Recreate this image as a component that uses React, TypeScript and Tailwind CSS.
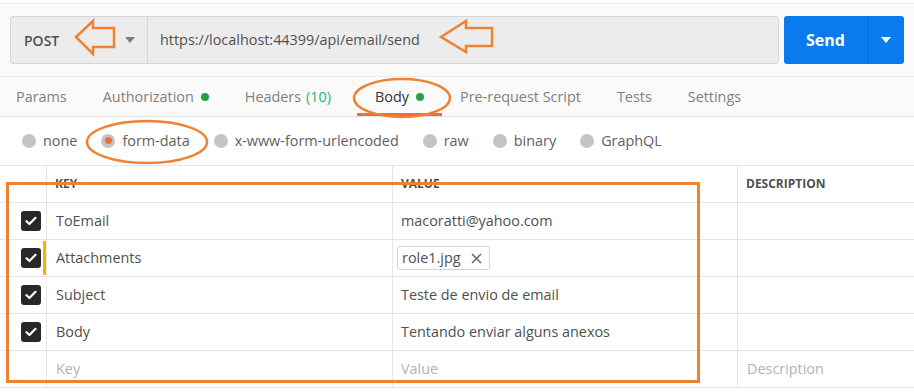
const TABS = [
  { label: 'Params' },
  { label: 'Authorization', dot: true },
  { label: 'Headers', count: '(10)' },
  { label: 'Body', dot: true, active: true },
  { label: 'Pre-request Script' },
  { label: 'Tests' },
  { label: 'Settings' },
];

const BODY_TYPES = ['none', 'form-data', 'x-www-form-urlencoded', 'raw', 'binary', 'GraphQL'];

const ROWS = [
  { key: 'ToEmail', value: 'macoratti@yahoo.com' },
  { key: 'Attachments', file: 'role1.jpg', marked: true },
  { key: 'Subject', value: 'Teste de envio de email' },
  { key: 'Body', value: 'Tentando enviar alguns anexos' },
];

function Check() {
  return (
    <div className="flex h-[20px] w-[20px] items-center justify-center rounded-[3px] bg-[#282828]">
      <svg width="12" height="10" viewBox="0 0 12 10" fill="none">
        <path d="M1.5 5.2 4.4 8 10.5 1.8" stroke="white" strokeWidth="2.2" strokeLinecap="round" strokeLinejoin="round" />
      </svg>
    </div>
  );
}

function Annotations() {
  return (
    <svg className="pointer-events-none absolute left-0 top-0" width="914" height="392" viewBox="0 0 914 392" fill="none">
      <g stroke="#ee8233" strokeWidth="2.5" strokeLinejoin="miter">
        <path d="M76 37 93 21 V28 H114 V47 H93 V54 Z" />
        <path d="M441 37 466 21 V28 H492 V46 H466 V52 Z" />
        <ellipse cx="402" cy="98" rx="48" ry="19" />
        <ellipse cx="147" cy="142" rx="60" ry="21" />
      </g>
      <rect x="7.5" y="183.5" width="691" height="198" stroke="#ee8233" strokeWidth="3" />
    </svg>
  );
}

export default function App() {
  return (
    <div className="relative h-[392px] w-[914px] overflow-hidden bg-white font-['Open_Sans',sans-serif] text-[14.4px] text-[#505050]">
      <div className="mt-[3px] border-t border-[#ebebeb] bg-[#fafafa]">
        <div className="flex h-[72px] items-start px-[10px] pt-[12px]">
          <div className="flex h-[48px] flex-1 rounded-[3px] border border-[#d6d6d6] bg-[#ececec]">
            <div className="flex w-[137px] items-center justify-between border-r border-[#d6d6d6] pl-[13px] pr-[12px]">
              <span className="text-[14px] font-semibold text-[#505050]">POST</span>
              <svg width="10" height="6" viewBox="0 0 10 6"><path d="M0 0h10L5 6z" fill="#808080" /></svg>
            </div>
            <div className="flex items-center pl-[12px] text-[#505050]">https://localhost:44399/api/email/send</div>
          </div>
          <div className="ml-[5px] flex h-[48px] w-[120px] rounded-[3px] bg-[#097bed] text-white">
            <div className="flex w-[83px] items-center justify-center text-[16px] font-bold">Send</div>
            <div className="flex flex-1 items-center justify-center border-l border-[#0a6acc]">
              <svg width="10" height="6" viewBox="0 0 10 6"><path d="M0 0h10L5 6z" fill="white" /></svg>
            </div>
          </div>
        </div>
        <div className="border-t border-[#ebebeb]">
          <div className="-ml-[2px] flex h-[40px] items-stretch border-b border-[#e3e3e3]">
            {TABS.map((t) => (
              <div
                key={t.label}
                className={`flex items-center gap-[7px] border-b-[3px] px-[18px] pt-[3px] ${
                  t.active ? 'ml-[8px] border-[#f26b3a] text-[#333]' : 'border-transparent text-[#808080]'
                }`}
              >
                <span>{t.label}</span>
                {t.count && <span className="-ml-[2px] text-[#26b47f]">{t.count}</span>}
                {t.dot && <span className="h-[8px] w-[8px] rounded-full bg-[#26a048]" />}
              </div>
            ))}
          </div>
        </div>
      </div>
      <div className="flex h-[48px] items-center gap-[24px] pl-[22px]">
        {BODY_TYPES.map((b) => (
          <div key={b} className="flex items-center gap-[7px] text-[#606060]">
            <span className="flex h-[14px] w-[14px] items-center justify-center rounded-full bg-[#c4c4c4]">
              {b === 'form-data' && <span className="h-[7px] w-[7px] rounded-full bg-[#f26b3a]" />}
            </span>
            <span>{b}</span>
          </div>
        ))}
      </div>
      <div className="border-t border-[#e6e6e6]">
        <div className="grid h-[37px] grid-cols-[46px_346px_345px_1fr] border-b border-[#e6e6e6] text-[12px] font-bold text-[#505050]">
          <div />
          <div className="flex items-center border-l border-[#e6e6e6] pl-[8px]">KEY</div>
          <div className="flex items-center border-l border-[#e6e6e6] pl-[8px]">VALUE</div>
          <div className="flex items-center border-l border-[#e6e6e6] pl-[8px]">DESCRIPTION</div>
        </div>
        {ROWS.map((r) => (
          <div key={r.key} className="grid h-[37px] grid-cols-[46px_346px_345px_1fr] border-b border-[#e6e6e6]">
            <div className="relative flex items-center pl-[21px]">
              <Check />
              {r.marked && <span className="absolute right-0 top-[1px] h-[34px] w-[3px] bg-[#f5b400]" />}
            </div>
            <div className="flex items-center border-l border-[#e6e6e6] pl-[9px]">{r.key}</div>
            <div className="flex items-center border-l border-[#e6e6e6] pl-[8px]">
              {r.file ? (
                <span className="-ml-[4px] flex h-[24px] items-center gap-[10px] rounded-[3px] border border-[#d4d4d4] pl-[4px] pr-[7px]">
                  {r.file}
                  <svg width="11" height="11" viewBox="0 0 11 11"><path d="M1 1l9 9M10 1l-9 9" stroke="#707070" strokeWidth="1.6" /></svg>
                </span>
              ) : (
                r.value
              )}
            </div>
            <div className="border-l border-[#e6e6e6]" />
          </div>
        ))}
        <div className="grid h-[37px] grid-cols-[46px_346px_345px_1fr] border-b border-[#e6e6e6] text-[#b3b3b3]">
          <div />
          <div className="flex items-center border-l border-[#e6e6e6] pl-[9px]">Key</div>
          <div className="flex items-center border-l border-[#e6e6e6] pl-[8px]">Value</div>
          <div className="flex items-center border-l border-[#e6e6e6] pl-[9px]">Description</div>
        </div>
      </div>
      <Annotations />
    </div>
  );
}
